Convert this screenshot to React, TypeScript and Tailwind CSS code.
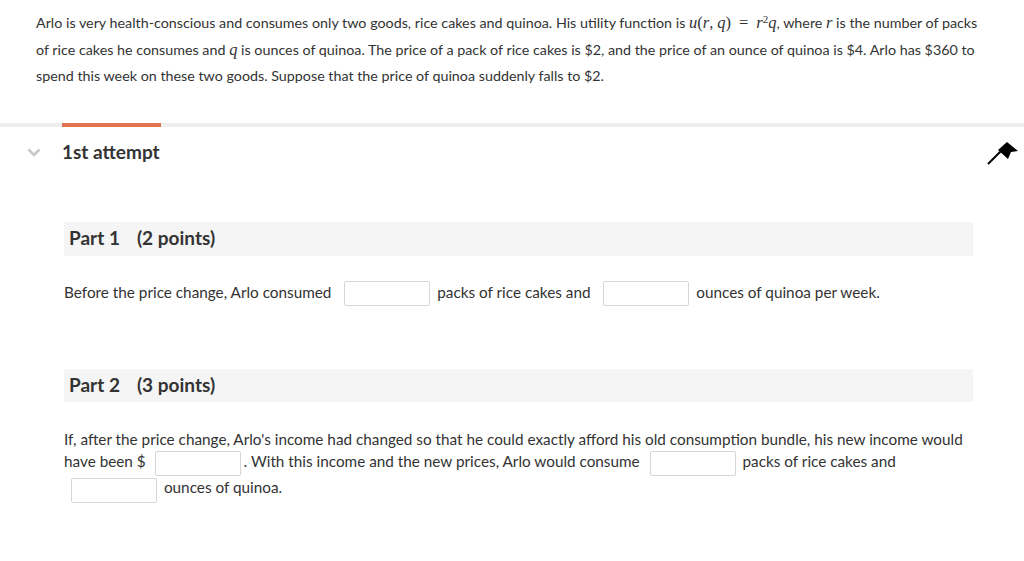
import React from "react";

const Blank = ({ className = "" }: { className?: string }) => (
  <input
    type="text"
    className={`inline-block align-middle w-[86px] h-[25px] border border-[#d6d6d6] rounded-[2px] bg-white outline-none ${className}`}
  />
);

const serif = "font-['Liberation_Serif',serif] text-[16.5px] leading-none";

export default function App() {
  return (
    <div className="min-h-[561px] bg-white text-[#333] font-['Lato','Liberation_Sans',sans-serif]">
      {/* Problem statement */}
      <div className="pl-[36px] pr-[34px] pt-[10px] text-[14.3px] leading-[26.5px]">
        <p>
          Arlo is very health-conscious and consumes only two goods, rice cakes and quinoa. His utility function is{" "}
          <span className={serif}>
            <i>u</i>(<i>r</i>,<i className="ml-[4px]">q</i>)<span className="mx-[8px]">=</span>
            <i>r</i>
            <sup className="text-[11px] leading-none">2</sup>
            <i>q</i>
          </span>
          , where <i className={serif}>r</i> is the number of packs of rice cakes he consumes and{" "}
          <i className={serif}>q</i> is ounces of quinoa. The price of a pack of rice cakes is $2, and the price of an
          ounce of quinoa is $4. Arlo has $360 to spend this week on these two goods. Suppose that the price of quinoa
          suddenly falls to $2.
        </p>
      </div>

      {/* Attempt tab bar */}
      <div className="mt-[33px] h-[4px] bg-[#eeeeee] flex">
        <div className="ml-[62px] w-[99px] bg-[#e07352]" />
      </div>

      <div className="flex items-center justify-between h-[52px]">
        <div className="flex items-center">
          <svg width="14" height="9" viewBox="0 0 14 9" className="ml-[27px] mr-[21px]">
            <path d="M1.5 1.5 L7 7 L12.5 1.5" fill="none" stroke="#c8c8c8" strokeWidth="2.6" />
          </svg>
          <span className="text-[19px] font-bold">1st attempt</span>
        </div>
        <svg width="40" height="30" viewBox="0 0 40 30">
          <path d="M4 26 L17 13" stroke="#000" strokeWidth="2" />
          <path d="M14 12 L23 4 L34 13 L27 14 L24 21 Z" fill="#000" />
        </svg>
      </div>

      {/* Part 1 */}
      <div className="ml-[64px] mr-[51px] mt-[43px]">
        <div className="h-[34px] bg-[#f5f5f5] flex items-center pl-[5px] text-[19px] font-bold">
          Part 1<span className="ml-[17px]">(2 points)</span>
        </div>
        <p className="mt-[25px] text-[15.3px] leading-[22px]">
          Before the price change, Arlo consumed <Blank className="ml-[9px] mr-[3px]" /> packs of rice cakes and{" "}
          <Blank className="ml-[9px] mr-[3px]" /> ounces of quinoa per week.
        </p>
      </div>

      {/* Part 2 */}
      <div className="ml-[64px] mr-[51px] mt-[63px]">
        <div className="h-[33px] bg-[#f5f5f5] flex items-center pl-[5px] text-[19px] font-bold">
          Part 2<span className="ml-[17px]">(3 points)</span>
        </div>
        <p className="mt-[26px] text-[15.3px] leading-[22px]">
          If, after the price change, Arlo's income had changed so that he could exactly afford his old consumption
          bundle, his new income would have been $ <Blank className="ml-[5px] mr-[3px]" />. With this income and the
          new prices, Arlo would consume <Blank className="ml-[6px] mr-[3px]" /> packs of rice cakes and{" "}
          <Blank className="ml-[7px] mr-[3px] mt-[2px]" /> ounces of quinoa.
        </p>
      </div>
    </div>
  );
}
